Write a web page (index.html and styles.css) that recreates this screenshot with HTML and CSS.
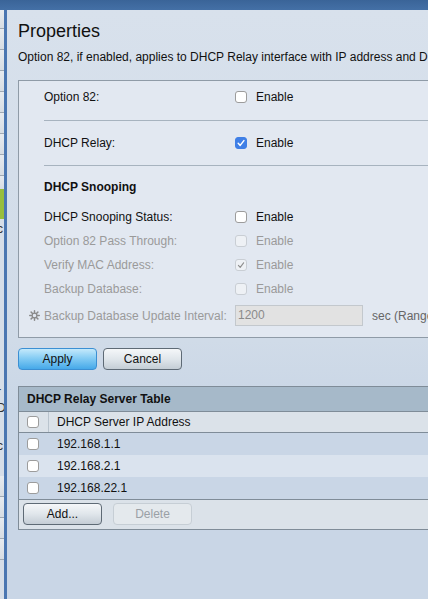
FILE: index.html
```html
<!DOCTYPE html>
<html>
<head>
<meta charset="utf-8">
<title>Properties</title>
<link rel="stylesheet" href="styles.css">
</head>
<body>
<div class="topbar"></div>
<div class="main">
  <div class="nav">
    <div class="tile first"></div>
    <div class="tile"></div>
    <div class="tile"></div>
    <div class="tile"></div>
    <div class="tile"></div>
    <div class="tile"></div>
    <div class="tile"></div>
    <div class="tile"></div>
    <div class="tile short"></div>
    <div class="green"></div>
    <div class="frag f1">c</div>
    <div class="frag f2">r</div>
    <div class="frag f3">D</div>
    <div class="frag f4">c</div>
    <div class="tile t2"></div>
    <div class="tile t3"></div>
    <div class="tile"></div>
    <div class="tile"></div>
  </div>
  <div class="rail"></div>
  <div class="dialog">
    <h1 class="title">Properties</h1>
    <p class="desc">Option 82, if enabled, applies to DHCP Relay interface with IP address and DHCP Snooping interface.</p>

    <div class="formbox">
      <div class="row">
        <span class="label">Option 82:</span>
        <span class="val"><span class="cb"></span><span class="cbl">Enable</span></span>
      </div>
      <div class="sep s1"></div>
      <div class="row r2">
        <span class="label">DHCP Relay:</span>
        <span class="val"><span class="cb checked"><svg viewBox="0 0 12 12" width="12" height="12"><polyline points="3.2,6.3 5.2,8.4 8.9,3.6" fill="none" stroke="#fff" stroke-width="1.5" stroke-linecap="round" stroke-linejoin="round"/></svg></span><span class="cbl">Enable</span></span>
      </div>
      <div class="sep s2"></div>
      <div class="row heading">DHCP Snooping</div>
      <div class="row r-status">
        <span class="label">DHCP Snooping Status:</span>
        <span class="val"><span class="cb"></span><span class="cbl">Enable</span></span>
      </div>
      <div class="row dis">
        <span class="label">Option 82 Pass Through:</span>
        <span class="val"><span class="cb off"></span><span class="cbl">Enable</span></span>
      </div>
      <div class="row dis">
        <span class="label">Verify MAC Address:</span>
        <span class="val"><span class="cb off"><svg viewBox="0 0 12 12" width="12" height="12"><polyline points="3.4,6.3 5.2,8.3 8.6,3.8" fill="none" stroke="#8d8d8d" stroke-width="1.1" stroke-linecap="round" stroke-linejoin="round"/></svg></span><span class="cbl">Enable</span></span>
      </div>
      <div class="row dis">
        <span class="label">Backup Database:</span>
        <span class="val"><span class="cb off"></span><span class="cbl">Enable</span></span>
      </div>
      <div class="row dis r-interval">
        <span class="label"><svg class="gear" viewBox="0 0 12 12" width="11" height="11"><g stroke="#8a8a8a" stroke-width="1.6" stroke-linecap="round"><line x1="6" y1="0.8" x2="6" y2="3"/><line x1="6" y1="9" x2="6" y2="11.2"/><line x1="0.8" y1="6" x2="3" y2="6"/><line x1="9" y1="6" x2="11.2" y2="6"/><line x1="2.3" y1="2.3" x2="3.9" y2="3.9"/><line x1="8.1" y1="8.1" x2="9.7" y2="9.7"/><line x1="2.3" y1="9.7" x2="3.9" y2="8.1"/><line x1="8.1" y1="3.9" x2="9.7" y2="2.3"/></g><circle cx="6" cy="6" r="2.6" fill="none" stroke="#8a8a8a" stroke-width="1.3"/></svg>Backup Database Update Interval:</span>
        <span class="val"><span class="input">1200</span><span class="unit">sec (Range: 600 - 86400, Default: 1200)</span></span>
      </div>
    </div>

    <div class="actions">
      <button class="btn primary">Apply</button>
      <button class="btn">Cancel</button>
    </div>

    <div class="table">
      <div class="thead">DHCP Relay Server Table</div>
      <div class="colhead">
        <span class="ccb"><span class="cb"></span></span>
        <span class="ctext">DHCP Server IP Address</span>
      </div>
      <div class="trow odd"><span class="rcb"><span class="cb"></span></span><span class="ctext">192.168.1.1</span></div>
      <div class="trow even"><span class="rcb"><span class="cb"></span></span><span class="ctext">192.168.2.1</span></div>
      <div class="trow odd"><span class="rcb"><span class="cb"></span></span><span class="ctext">192.168.22.1</span></div>
      <div class="tfoot">
        <button class="btn">Add...</button>
        <button class="btn disabled">Delete</button>
      </div>
    </div>
  </div>
</div>
</body>
</html>
```

FILE: styles.css
```css
* { box-sizing: border-box; }
html, body { margin: 0; padding: 0; }
body {
  width: 428px;
  height: 599px;
  overflow: hidden;
  font-family: "Liberation Sans", Arial, sans-serif;
  font-size: 12px;
  color: #111;
  background: #c9d6e6;
}
.topbar {
  height: 10px;
  background: linear-gradient(#3a6498, #4470a6);
}
.main {
  display: flex;
  height: 589px;
}

/* left navigation remnant */
.nav {
  width: 4px;
  flex: none;
  display: flex;
  flex-direction: column;
  background: #d6dee8;
  overflow: hidden;
}
.tile {
  flex: none;
  height: 21px;
  background: linear-gradient(#e7ebef, #d7dde3);
  border-bottom: 1px solid #a0a9b3;
}
.tile.first { height: 19px; }
.tile.short { height: 13px; border-bottom: none; }
.tile.t2 { margin-top: 0; }
.green {
  flex: none;
  height: 30px;
  background: #97be3d;
}
.frag {
  flex: none;
  height: 16px;
  line-height: 16px;
  font-size: 12px;
  color: #333;
  white-space: nowrap;
  margin-left: -3px;
}
.frag.f1 { margin-top: 2px; }
.frag.f2 { margin-top: 147px; }
.frag.f4 { margin-top: 22px; }
.frag.f4 + .tile { margin-top: 22px; }
.rail {
  width: 3px;
  flex: none;
  background: #4a76b1;
}

/* dialog */
.dialog {
  width: 640px;
  flex: none;
  padding: 10px 0 0 11px;
  background: linear-gradient(180deg, #d8e1ec 0, #d0dbe8 330px, #c9d6e6 400px, #c9d6e6 100%);
}
.title {
  margin: 0;
  font-size: 18px;
  font-weight: normal;
  line-height: 22px;
  color: #111;
}
.desc {
  margin: 8px 0 0;
  line-height: 14px;
  white-space: nowrap;
  color: #111;
}

.formbox {
  margin-top: 16px;
  border: 1px solid #8f9ba7;
  border-right: none;
  background: #e2e8f1;
  padding: 4px 0 8px 25px;
}
.row {
  display: flex;
  align-items: center;
  height: 24px;
  white-space: nowrap;
}
.row.r2 { margin-top: 10px; }
.row.heading { margin-top: 9px; font-weight: bold; }
.row.r-status { margin-top: 6px; }
.row.r-interval { margin-top: 1px; height: 27px; }
.row.dis { color: #9a9a9a; }
.label {
  width: 191px;
  flex: none;
}
.val {
  display: flex;
  align-items: center;
}
.sep {
  height: 1px;
  background: #a7b3bf;
}
.sep.s1 { margin-top: 11px; }
.sep.s2 { margin-top: 10px; }

.cb {
  width: 12px;
  height: 12px;
  flex: none;
  display: block;
  border: 1px solid #9c9c9c;
  border-radius: 3px;
  background: #fff;
  position: relative;
}
.cb svg {
  position: absolute;
  left: -1px;
  top: -1px;
}
.cb.checked {
  background: #3f7fe6;
  border-color: #3f7fe6;
}
.cb.off {
  background: #eef1f5;
  border-color: #c9ced4;
}
.cbl { margin-left: 9px; }
.row.dis .cbl { color: #9a9a9a; }

.gear {
  margin-left: -15px;
  margin-right: 4px;
  vertical-align: -1px;
}
.input {
  display: block;
  width: 128px;
  height: 21px;
  line-height: 19px;
  padding-left: 2px;
  border: 1px solid #c3c8cd;
  background: #e2e2e2;
  color: #8a8a8a;
}
.unit {
  margin-left: 9px;
  color: #666;
}

/* buttons */
.actions {
  display: flex;
  gap: 6px;
  margin-top: 10px;
}
.btn {
  width: 79px;
  height: 22px;
  padding: 0;
  border: 1px solid #5e6a75;
  border-radius: 4px;
  background: linear-gradient(#f5f7f9, #e0e6eb 50%, #c4cdd5);
  font-family: "Liberation Sans", Arial, sans-serif;
  font-size: 12px;
  color: #111;
}
.btn.primary {
  border-color: #3b8fd3;
  background: linear-gradient(#c4e9fb, #86cdf4 45%, #46a9e9);
}
.btn.disabled {
  border-color: #c6ced5;
  background: #e4e9ed;
  color: #9aa0a6;
}

/* table */
.table {
  margin-top: 16px;
  width: 620px;
  border: 1px solid #7f8c98;
  border-right: none;
}
.thead {
  height: 25px;
  line-height: 24px;
  padding-left: 8px;
  background: #a6b9c9;
  border-bottom: 1px solid #7f8c98;
  font-weight: bold;
  color: #111;
}
.colhead {
  display: flex;
  align-items: stretch;
  height: 21px;
  background: #dbe2e9;
  border-bottom: 1px solid #7f8c98;
}
.ccb {
  width: 30px;
  flex: none;
  display: flex;
  align-items: center;
  padding-left: 8px;
  border-right: 1px solid #b9c4ce;
}
.colhead .ctext {
  display: flex;
  align-items: center;
}
.ctext { padding-left: 8px; }
.trow {
  display: flex;
  align-items: center;
  height: 22px;
}
.trow.odd { background: #c9d6e6; }
.trow.even { background: #dae3ee; }
.rcb {
  width: 30px;
  flex: none;
  padding-left: 8px;
}
.tfoot {
  display: flex;
  gap: 11px;
  height: 30px;
  padding: 3px 0 0 4px;
  background: #dbe2e9;
  border-top: 1px solid #7f8c98;
}
```
